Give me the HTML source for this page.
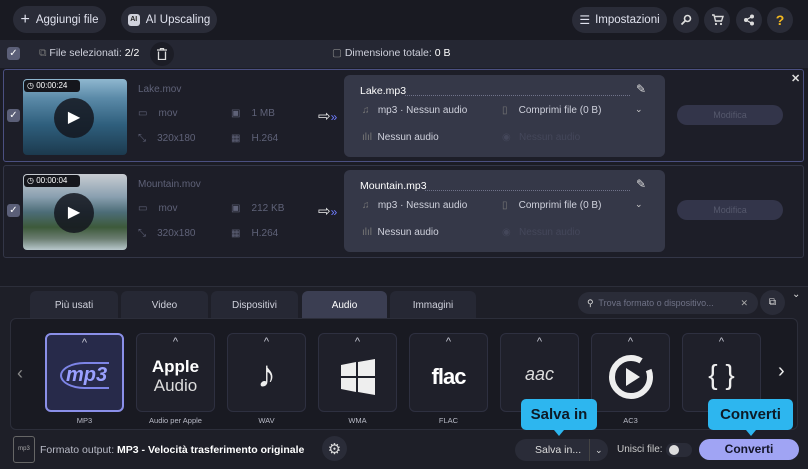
<!DOCTYPE html>
<html><head><meta charset="utf-8"><style>
*{margin:0;padding:0;box-sizing:border-box}
body{width:808px;height:469px;overflow:hidden;background:#1b1c25;font-family:"Liberation Sans",sans-serif;color:#d6d8e4;position:relative;font-size:11px}
.a{position:absolute}
.pill{position:absolute;background:#2a2c38;border-radius:14px;color:#e0e2ee;font-size:11.5px;display:flex;align-items:center;justify-content:center}
.circ{position:absolute;width:26px;height:26px;border-radius:13px;background:#2a2c38;display:flex;align-items:center;justify-content:center}
.cb{position:absolute;width:13px;height:13px;border-radius:3px;background:#5b5f78;color:#fff;font-size:10px;line-height:13px;text-align:center}
.card{position:absolute;left:3px;width:801px;height:93px;border:1px solid #333647;border-radius:3px;background:#1d1e28}
.dim{color:#5f6278;font-size:10px}
.out{position:absolute;left:344px;width:321px;height:82px;background:#353848;border-radius:6px}
.tab{position:absolute;top:291px;height:28px;background:#262834;border-radius:6px 6px 0 0;font-size:10px;color:#d0d2dc;display:flex;align-items:center;justify-content:center}
.tile{position:absolute;top:333px;width:79px;height:79px;border:1px solid #2e3040;border-radius:6px;background:#1f202a;display:flex;align-items:center;justify-content:center}
.tile .car{position:absolute;top:2px;left:0;right:0;text-align:center;color:#c8cad6;font-size:11px}
.lbl{position:absolute;top:416px;width:79px;text-align:center;font-size:7.5px;color:#b8bac6}
.tip{position:absolute;background:#2db6ef;color:#0d1a26;font-size:15px;font-weight:bold;border-radius:5px;display:flex;align-items:center;justify-content:center}
.tip:after{content:"";position:absolute;bottom:-6px;left:50%;margin-left:-5px;border:5px solid transparent;border-top-color:#2db6ef;border-bottom:0;width:0;height:0;border-top-width:6px}
</style></head><body>
<div class="a" style="left:0;top:0;width:808px;height:40px;background:#191a22"></div>
<div class="pill" style="left:13px;top:6px;width:93px;height:27px"><span style="font-size:16px;margin-right:6px">+</span>Aggiungi file</div>
<div class="pill" style="left:121px;top:6px;width:96px;height:27px"><span style="display:inline-block;width:12px;height:12px;border-radius:3px;background:#d0d2dc;color:#222;font-size:7px;font-weight:bold;line-height:12px;text-align:center;margin-right:6px">AI</span>AI Upscaling</div>
<div class="pill" style="left:572px;top:7px;width:95px;height:26px"><span style="margin-right:5px;font-size:12px">☰</span>Impostazioni</div>
<div class="circ" style="left:673px;top:7px"><svg width="12" height="12" viewBox="0 0 12 12"><circle cx="7.5" cy="4.5" r="3" stroke="#ddd" stroke-width="1.6" fill="none"/><path d="M5.5 6.5L1.5 10.5" stroke="#ddd" stroke-width="1.8"/></svg></div>
<div class="circ" style="left:704px;top:7px"><svg width="13" height="12" viewBox="0 0 13 12"><path d="M1 1h2l1.5 6h6l1.5-4.5H4" stroke="#ddd" stroke-width="1.4" fill="none"/><circle cx="5" cy="10" r="1.1" fill="#ddd"/><circle cx="10" cy="10" r="1.1" fill="#ddd"/></svg></div>
<div class="circ" style="left:736px;top:7px"><svg width="12" height="12" viewBox="0 0 12 12"><circle cx="9" cy="2.5" r="2" fill="#ddd"/><circle cx="3" cy="6" r="2" fill="#ddd"/><circle cx="9" cy="9.5" r="2" fill="#ddd"/><path d="M9 2.5L3 6L9 9.5" stroke="#ddd" stroke-width="1.3" fill="none"/></svg></div>
<div class="circ" style="left:767px;top:7px;color:#f3b81f;font-weight:bold;font-size:14px">?</div>
<div class="a" style="left:0;top:40px;width:808px;height:28px;background:#252733"></div>
<div class="cb" style="left:7px;top:47px">✓</div>
<div class="a" style="left:39px;top:47px;font-size:10.5px;color:#cfd1dc"><span style="color:#777">⧉</span> File selezionati: <span style="color:#fff">2/2</span></div>
<div class="circ" style="left:150px;top:42px;width:24px;height:24px;background:#1c1d26"><svg width="10" height="12" viewBox="0 0 10 12"><path d="M0 2h10M3.5 2V0.5h3V2M1.5 3.5v8h7v-8" stroke="#ddd" stroke-width="1.3" fill="none"/></svg></div>
<div class="a" style="left:332px;top:47px;font-size:10.5px;color:#cfd1dc"><span style="color:#888">▢</span> Dimensione totale: <span style="color:#fff">0 B</span></div>
<div class="card" style="top:69px;border-color:#4b5081"></div>
<div class="cb" style="left:7px;top:109px">✓</div>
<div class="a" style="left:23px;top:79px;width:104px;height:76px;border-radius:4px;background:linear-gradient(180deg,#8fb7cf 0%,#5b8aa8 25%,#2f5f7d 60%,#1c3a4e 100%)"></div>
<div class="a" style="left:24px;top:80px;width:56px;height:12px;background:#15161c;border-radius:3px;font-size:8px;color:#fff;padding-left:3px;line-height:12px">◷ 00:00:24</div>
<div class="a" style="left:54px;top:98px;width:40px;height:40px;border-radius:20px;background:rgba(20,22,30,.85);color:#fff;font-size:16px;text-align:center;line-height:40px">▶</div>
<div class="a dim" style="left:138px;top:84px">Lake.mov</div>
<div class="a dim" style="left:138px;top:108px">▭&nbsp;&nbsp;&nbsp;&nbsp;mov</div>
<div class="a dim" style="left:231px;top:108px">▣&nbsp;&nbsp;&nbsp;&nbsp;1 MB</div>
<div class="a dim" style="left:138px;top:133px">⤡&nbsp;&nbsp;&nbsp;&nbsp;320x180</div>
<div class="a dim" style="left:231px;top:133px">▦&nbsp;&nbsp;&nbsp;&nbsp;H.264</div>
<div class="a" style="left:318px;top:107px;color:#eee;font-size:15px">⇨<span style="color:#6f7cff;font-size:12px">»</span></div>
<div class="out" style="top:75px"></div>
<div class="a" style="left:360px;top:85px;font-size:10.5px;color:#fff">Lake.mp3</div>
<div class="a" style="left:405px;top:95px;width:225px;border-top:1px dotted #70738a"></div>
<div class="a" style="left:636px;top:82px;color:#ddd;font-size:12px">✎</div>
<div class="a" style="left:362px;top:105px;font-size:10px;color:#cfd1dc"><span style="color:#777">♫</span>&nbsp;&nbsp;&nbsp;mp3 · Nessun audio</div>
<div class="a" style="left:502px;top:105px;font-size:10px;color:#cfd1dc"><span style="color:#777">▯</span>&nbsp;&nbsp;&nbsp;&nbsp;Comprimi file (0 B)</div>
<div class="a" style="left:635px;top:104px;font-size:9px;color:#ccc">⌄</div>
<div class="a" style="left:362px;top:132px;font-size:10px;color:#cfd1dc"><span style="color:#777">ılıl</span>&nbsp;&nbsp;Nessun audio</div>
<div class="a" style="left:502px;top:132px;font-size:10px;color:#44475a">◉&nbsp;&nbsp;&nbsp;Nessun audio</div>
<div class="a" style="left:677px;top:105px;width:106px;height:20px;border-radius:10px;background:#33354a;font-size:9px;color:#55586c;text-align:center;line-height:20px">Modifica</div>
<div class="a" style="left:791px;top:72px;color:#ddd;font-size:11px;font-weight:bold">✕</div>
<div class="card" style="top:165px"></div>
<div class="cb" style="left:7px;top:204px">✓</div>
<div class="a" style="left:23px;top:174px;width:104px;height:76px;border-radius:4px;background:linear-gradient(180deg,#c8ccd2 0%,#8aa0b0 30%,#4d6d78 50%,#3d5a3a 70%,#6a7d70 85%,#b8c8cc 100%)"></div>
<div class="a" style="left:24px;top:175px;width:56px;height:12px;background:#15161c;border-radius:3px;font-size:8px;color:#fff;padding-left:3px;line-height:12px">◷ 00:00:04</div>
<div class="a" style="left:54px;top:193px;width:40px;height:40px;border-radius:20px;background:rgba(20,22,30,.85);color:#fff;font-size:16px;text-align:center;line-height:40px">▶</div>
<div class="a dim" style="left:138px;top:179px">Mountain.mov</div>
<div class="a dim" style="left:138px;top:203px">▭&nbsp;&nbsp;&nbsp;&nbsp;mov</div>
<div class="a dim" style="left:231px;top:203px">▣&nbsp;&nbsp;&nbsp;&nbsp;212 KB</div>
<div class="a dim" style="left:138px;top:228px">⤡&nbsp;&nbsp;&nbsp;&nbsp;320x180</div>
<div class="a dim" style="left:231px;top:228px">▦&nbsp;&nbsp;&nbsp;&nbsp;H.264</div>
<div class="a" style="left:318px;top:202px;color:#eee;font-size:15px">⇨<span style="color:#6f7cff;font-size:12px">»</span></div>
<div class="out" style="top:170px"></div>
<div class="a" style="left:360px;top:180px;font-size:10.5px;color:#fff">Mountain.mp3</div>
<div class="a" style="left:425px;top:190px;width:205px;border-top:1px dotted #70738a"></div>
<div class="a" style="left:636px;top:177px;color:#ddd;font-size:12px">✎</div>
<div class="a" style="left:362px;top:200px;font-size:10px;color:#cfd1dc"><span style="color:#777">♫</span>&nbsp;&nbsp;&nbsp;mp3 · Nessun audio</div>
<div class="a" style="left:502px;top:200px;font-size:10px;color:#cfd1dc"><span style="color:#777">▯</span>&nbsp;&nbsp;&nbsp;&nbsp;Comprimi file (0 B)</div>
<div class="a" style="left:635px;top:199px;font-size:9px;color:#ccc">⌄</div>
<div class="a" style="left:362px;top:227px;font-size:10px;color:#cfd1dc"><span style="color:#777">ılıl</span>&nbsp;&nbsp;Nessun audio</div>
<div class="a" style="left:502px;top:227px;font-size:10px;color:#44475a">◉&nbsp;&nbsp;&nbsp;Nessun audio</div>
<div class="a" style="left:677px;top:200px;width:106px;height:20px;border-radius:10px;background:#33354a;font-size:9px;color:#55586c;text-align:center;line-height:20px">Modifica</div>
<div class="a" style="left:0;top:286px;width:808px;height:183px;background:#1e1f28;border-top:1px solid #2c2e3a"></div>
<div class="tab" style="left:30px;width:88px">Più usati</div>
<div class="tab" style="left:121px;width:87px">Video</div>
<div class="tab" style="left:211px;width:87px">Dispositivi</div>
<div class="tab" style="left:302px;width:85px;background:#3b3e52;color:#fff">Audio</div>
<div class="tab" style="left:390px;width:86px">Immagini</div>
<div class="a" style="left:578px;top:292px;width:180px;height:22px;border-radius:11px;background:#2a2c38;font-size:9px;color:#6f7286;line-height:22px;padding-left:9px"><span style="color:#ddd">⚲</span>&nbsp; Trova formato o dispositivo...<span style="position:absolute;right:10px;color:#aaa">✕</span></div>
<div class="circ" style="left:760px;top:290px;width:25px;height:25px;font-size:10px;color:#ddd">⧉</div>
<div class="a" style="left:792px;top:289px;font-size:10px;color:#ddd">⌄</div>
<div class="a" style="left:10px;top:318px;width:788px;height:112px;border:1px solid #2c2e3a;border-radius:6px;background:#191a22"></div>
<div class="a" style="left:17px;top:363px;color:#888;font-size:18px">‹</div>
<div class="a" style="left:778px;top:360px;color:#eee;font-size:20px">›</div>
<div class="tile" style="left:45px;border:2px solid #8a8fe8;background:#272a4a"><div class="car">^</div><span style="color:#9aa0ff;font-size:20px;font-weight:bold;font-style:italic;border:2px solid #7d84e6;border-radius:50% 0 0 50%;border-right:none;padding:0 2px 0 4px;margin-top:6px">mp3</span></div>
<div class="tile" style="left:136px"><div class="car">^</div><div style="text-align:center;line-height:19px;margin-top:6px"><div style="font-weight:bold;font-size:17px;color:#fff">Apple</div><div style="font-size:17px;color:#ddd">Audio</div></div></div>
<div class="tile" style="left:227px"><div class="car">^</div><span style="font-size:38px;color:#eee;margin-top:6px">♪</span></div>
<div class="tile" style="left:318px"><div class="car">^</div><svg width="40" height="36" viewBox="0 0 40 36" style="margin-top:8px"><path d="M3 6l15-3v14H3zM20 3l17-3v17H20zM3 19h15v14L3 30zM20 19h17v17l-17-3z" fill="#eee"/></svg></div>
<div class="tile" style="left:409px"><div class="car">^</div><span style="font-size:22px;color:#fff;font-weight:bold;margin-top:8px;letter-spacing:-1px">flac</span></div>
<div class="tile" style="left:500px"><div class="car">^</div><span style="font-size:18px;color:#ddd;font-style:italic;margin-top:4px">aac</span></div>
<div class="tile" style="left:591px"><div class="car">^</div><svg width="48" height="48" viewBox="0 0 48 48" style="margin-top:8px"><circle cx="24" cy="24" r="19" stroke="#eee" stroke-width="6" fill="none" stroke-dasharray="100 12"/><path d="M19 15l14 9-14 9z" fill="#eee"/></svg></div>
<div class="tile" style="left:682px"><div class="car">^</div><span style="font-size:28px;color:#eee;margin-top:4px">{ }</span></div>
<div class="lbl" style="left:45px">MP3</div>
<div class="lbl" style="left:136px">Audio per Apple</div>
<div class="lbl" style="left:227px">WAV</div>
<div class="lbl" style="left:318px">WMA</div>
<div class="lbl" style="left:409px">FLAC</div>
<div class="lbl" style="left:591px">AC3</div>
<div class="a" style="left:13px;top:436px;width:22px;height:27px;border:1px solid #666;border-radius:3px;font-size:6px;color:#aaa;text-align:center;line-height:25px">mp3</div>
<div class="a" style="left:40px;top:444px;font-size:10.5px;color:#b8bac6">Formato output: <b style="color:#fff">MP3 - Velocità trasferimento originale</b></div>
<div class="circ" style="left:322px;top:436px;width:25px;height:25px;font-size:15px;color:#ddd">⚙</div>
<div class="a" style="left:515px;top:439px;width:93px;height:22px;border-radius:11px;background:#2a2c38;font-size:10.5px;color:#ddd;line-height:22px;padding-left:20px">Salva in...<span style="position:absolute;left:74px;top:0;border-left:1px solid #444;padding-left:5px;font-size:9px">⌄</span></div>
<div class="a" style="left:617px;top:444px;font-size:10px;color:#ccc">Unisci file:</div>
<div class="a" style="left:666px;top:443px;width:26px;height:14px;border-radius:7px;background:#2a2c38"><div style="position:absolute;left:3px;top:2px;width:10px;height:10px;border-radius:5px;background:#ddd"></div></div>
<div class="a" style="left:699px;top:439px;width:100px;height:21px;border-radius:11px;background:#a0a4f4;color:#14162a;font-size:12px;font-weight:bold;text-align:center;line-height:21px">Converti</div>
<div class="tip" style="left:521px;top:399px;width:76px;height:31px">Salva in</div>
<div class="tip" style="left:708px;top:399px;width:85px;height:31px">Converti</div>
</body></html>
